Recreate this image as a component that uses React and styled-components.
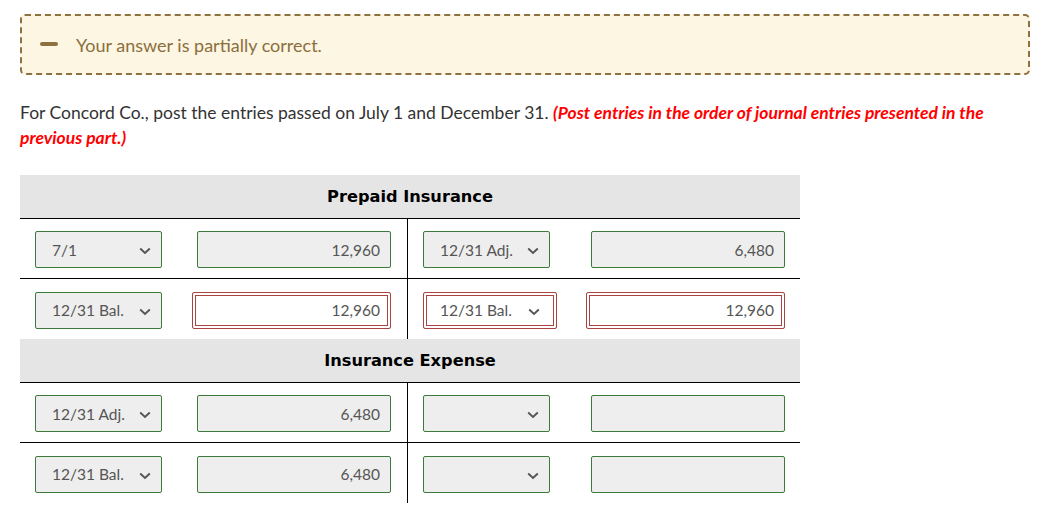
import React from 'react'
import styled, { createGlobalStyle } from 'styled-components'

const GlobalStyle = createGlobalStyle`
    body {
        margin: 0;
        background: #fff;
        font-family: Lato, "Open Sans", sans-serif;
    }
`

const Page = styled.div`
    padding: 14px 18px 0 20px;
`

const Banner = styled.div`
    display: flex;
    align-items: center;
    height: 57px;
    padding: 0 18px;
    border: 2px dashed #8e7140;
    border-radius: 5px;
    background-color: #fdf6e2;
    color: #8b6e3e;
    font-size: 18px;
`

const Minus = styled.span`
    width: 18px;
    height: 4px;
    border-radius: 2px;
    background-color: #8e7140;
    margin-right: 18px;
    margin-top: -2px;
`

const Prompt = styled.p`
    margin: 25px 0 0;
    font-size: 17.5px;
    line-height: 25px;
    color: #333;
`

const Note = styled.em`
    color: #f00;
    font-weight: bold;
`

const Ledger = styled.div`
    width: 780px;
    margin-top: 25px;
`

const Title = styled.div`
    height: 43px;
    display: flex;
    align-items: center;
    justify-content: center;
    background-color: #e5e5e5;
    border-bottom: 1px solid #000;
    font-family: "DejaVu Sans", Verdana, sans-serif;
    font-weight: bold;
    font-size: 16.2px;
    color: #000;
`

const Row = styled.div`
    display: grid;
    grid-template-columns: 387px 1fr;
    border-bottom: ${props => props.last ? 'none' : '1px solid #000'};
`

const Side = styled.div`
    height: ${props => props.last ? '60px' : '59px'};
    display: flex;
    align-items: center;
    justify-content: space-between;
    padding: 2px ${props => props.right ? '15px' : '16px'} 0 15px;
    box-sizing: border-box;
    border-left: ${props => props.right ? '1px solid #000' : 'none'};
`

const SelectBox = styled.div`
    position: relative;
    box-sizing: border-box;
    width: ${props => props.wrong ? '134px' : '127px'};
    margin-right: ${props => props.wrong ? '-7px' : '0'};
    height: 37px;
    display: flex;
    align-items: center;
    padding: 0 0 0 16px;
    border: 1px solid ${props => props.wrong ? '#a94442' : '#3c7a3c'};
    border-radius: 2px;
    background-color: ${props => props.wrong ? '#fff' : '#eeeeee'};
    box-shadow: ${props => props.wrong ? 'inset 0 0 0 2px #fff, inset 0 0 0 3px #a94442' : 'none'};
    font-size: 15.5px;
    color: #555;
`

const Chevron = styled.svg`
    position: absolute;
    right: ${props => props.wrong ? '16px' : '10px'};
    top: 15px;
`

const Amount = styled.div`
    box-sizing: border-box;
    width: ${props => props.wrong ? '199px' : '194px'};
    margin-left: ${props => props.wrong ? '-5px' : '0'};
    height: 37px;
    display: flex;
    align-items: center;
    justify-content: flex-end;
    padding-right: 10px;
    border: 1px solid ${props => props.wrong ? '#a94442' : '#3c7a3c'};
    border-radius: 2px;
    background-color: ${props => props.wrong ? '#fff' : '#eeeeee'};
    box-shadow: ${props => props.wrong ? 'inset 0 0 0 2px #fff, inset 0 0 0 3px #a94442' : 'none'};
    font-size: 15.5px;
    color: #555;
`

const Select = ({ value, wrong }) => (
    <SelectBox wrong={wrong}>
        {value}
        <Chevron wrong={wrong} width="12" height="8" viewBox="0 0 12 8">
            <path d="M1.2 1.5 L6 6 L10.8 1.5" fill="none" stroke="#555" strokeWidth="1.9" />
        </Chevron>
    </SelectBox>
)

const Entry = ({ entry, right, last }) => (
    <Side right={right} last={last}>
        <Select value={entry.date} wrong={entry.wrongDate} />
        <Amount wrong={entry.wrongAmount}>{entry.amount}</Amount>
    </Side>
)

const accounts = [
    {
        name: 'Prepaid Insurance',
        rows: [
            [{ date: '7/1', amount: '12,960' }, { date: '12/31 Adj.', amount: '6,480' }],
            [
                { date: '12/31 Bal.', amount: '12,960', wrongAmount: true },
                { date: '12/31 Bal.', amount: '12,960', wrongDate: true, wrongAmount: true },
            ],
        ],
    },
    {
        name: 'Insurance Expense',
        rows: [
            [{ date: '12/31 Adj.', amount: '6,480' }, { date: '', amount: '' }],
            [{ date: '12/31 Bal.', amount: '6,480' }, { date: '', amount: '' }],
        ],
    },
]

const App = () => (
    <Page>
        <GlobalStyle />
        <Banner>
            <Minus />
            Your answer is partially correct.
        </Banner>
        <Prompt>
            For Concord Co., post the entries passed on July 1 and December 31.{' '}
            <Note>(Post entries in the order of journal entries presented in the previous part.)</Note>
        </Prompt>
        <Ledger>
            {accounts.map(account => (
                <div key={account.name}>
                    <Title>{account.name}</Title>
                    {account.rows.map((row, i) => {
                        const last = i === account.rows.length - 1
                        return (
                            <Row key={i} last={last}>
                                <Entry entry={row[0]} last={last} />
                                <Entry entry={row[1]} last={last} right />
                            </Row>
                        )
                    })}
                </div>
            ))}
        </Ledger>
    </Page>
)

export default App
